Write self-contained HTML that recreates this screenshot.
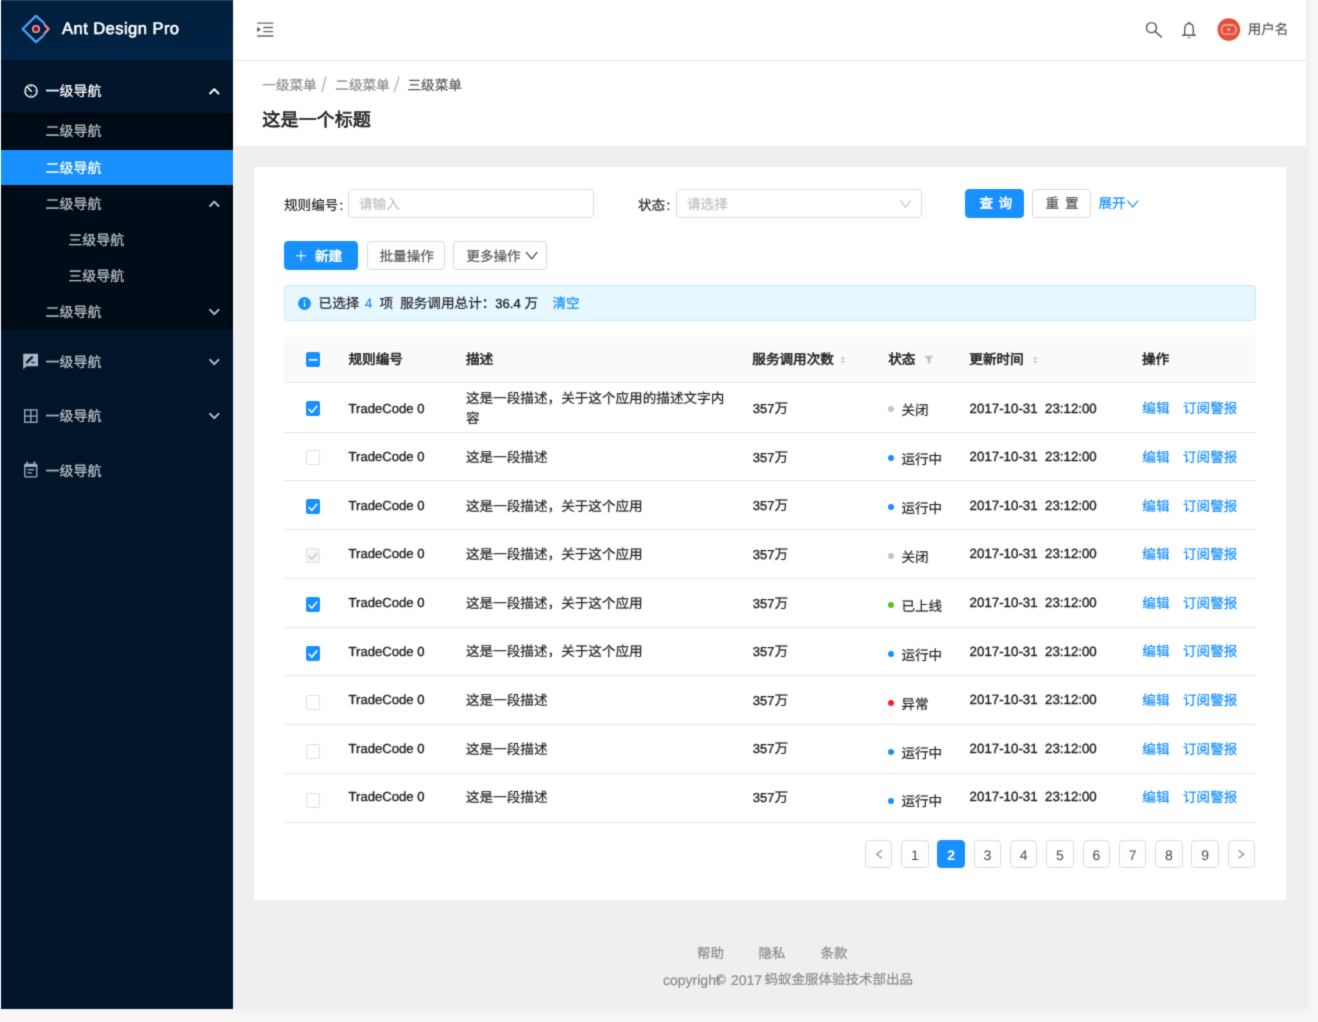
<!DOCTYPE html>
<html lang="zh-CN"><head><meta charset="utf-8"><title>Ant Design Pro</title>
<style>
*{box-sizing:border-box;margin:0;padding:0}
html,body{width:1318px;height:1022px;overflow:hidden}
body{position:relative;background:#f6f6f6;font-family:"Liberation Sans",sans-serif;font-size:13.6px;color:#262626;text-rendering:geometricPrecision}
#w{position:absolute;left:0;top:0;width:1318px;height:1022px;background:#f6f6f6;filter:url(#soft)}
.a{position:absolute;white-space:nowrap}
.t{position:absolute;white-space:nowrap;line-height:20px;height:20px;-webkit-text-stroke:0.2px}
svg{position:absolute;overflow:visible}
.l{font-size:13px;color:#222;-webkit-text-stroke:0.35px #222}
#main{left:234px;top:0;width:1078px;height:1013px;background:linear-gradient(to right,#efefef 1072.5px,#f6f6f6 1078px)}
#mainb{left:234px;top:1008px;width:1078px;height:6px;background:linear-gradient(to bottom,rgba(246,246,246,0),#f6f6f6)}
#side{left:1px;top:0;width:232px;height:1009px;background:#001529}
#logo{left:0;top:0;width:232px;height:59.6px;background:linear-gradient(to bottom,#001e3b,#002140 55%,#002547)}
#sub{left:0;top:113px;width:232px;height:216px;background:#000c17;box-shadow:inset 0 3px 7px -1px rgba(0,0,0,.5)}
#sel{left:0;top:149.8px;width:232px;height:35.6px;background:#1890ff}
.m1{color:#fff;font-size:14px}
.m2{color:rgba(255,255,255,.67);font-size:14px}
#hdr{left:234px;top:0;width:1072px;height:60.5px;background:#fff;border-bottom:1px solid #e4e4e4}
#ph{left:234px;top:60.5px;width:1072px;height:85px;background:#fff}
#card{left:254px;top:166.8px;width:1032.4px;height:733.2px;background:#fff}
.inp{border:1px solid #dcdcdc;border-radius:4px;background:#fff;height:29px}
.ph{color:#bfbfbf}
.btn{border:1px solid #d9d9d9;border-radius:4px;background:#fff;height:28.8px}
.btn.p{background:#1890ff;border-color:#1890ff}
.bt{color:#595959}
.bw{color:#fff;-webkit-text-stroke:0.5px #fff}
.lnk{color:#1890ff}
#alert{left:284px;top:284.6px;width:972px;height:36px;background:#e6f7ff;border:1px solid #c5e8fb;border-radius:4px}
#th{left:284px;top:336.5px;width:972px;height:46.7px;background:#fafafa;border-bottom:1px solid #e8e8e8}
.th{color:#222;-webkit-text-stroke:0.55px #222}
.rl{left:284px;width:972px;height:1px;background:#e8e8e8}
.cb{width:14.5px;height:14.5px;border:1px solid #e0e0e0;border-radius:2px;background:#fff}
.cb.on{background:#1890ff;border-color:#1890ff}
.cb.dis{background:#f5f5f5;border-color:#e0e0e0}
.dot{width:6px;height:6px;border-radius:50%}
.pg{top:840.3px;width:27.6px;height:27.4px;border:1px solid #dcdcdc;border-radius:4px;background:#fff;text-align:center;line-height:28.6px;color:#4a4a4a;font-size:14px}
.pg.on{background:#1890ff;border-color:#1890ff;color:#fff;font-weight:bold}
.ft{color:#8c8c8c;font-size:14px}
</style></head>
<body>
<svg width="0" height="0" style="position:absolute;left:0;top:0"><filter id="soft" x="0" y="0" width="100%" height="100%" color-interpolation-filters="sRGB"><feConvolveMatrix order="3" kernelMatrix="1 4 1 4 20 4 1 4 1" divisor="40" edgeMode="duplicate" preserveAlpha="true"/></filter></svg>
<div id="w">
<div class="a" id="main"></div><div class="a" id="mainb"></div>
<div class="a" id="hdr"></div>
<div class="a" id="ph"></div>
<div class="a" id="card"></div>
<div class="a" style="left:0;top:0;width:1px;height:1010px;background:#fff"></div>
<div class="a" id="side">
<div class="a" id="logo"></div>
<div class="a" id="sub"></div>
<div class="a" id="sel"></div>
<div class="a" style="left:0;top:0;width:232px;height:1px;background:rgba(255,255,255,.16)"></div>
</div>
<svg style="left:20px;top:13px" width="32" height="32" viewBox="0 0 32 32" ><path d="M24 10 L16 2.9 L2.6 16 L16 29.1 L24 22" fill="none" stroke="#4aa3ff" stroke-width="2.2" stroke-linejoin="round" stroke-linecap="round"/><circle cx="16" cy="16" r="3.3" fill="#8e1020" stroke="#f3a3ad" stroke-width="1.5"/><path d="M24.6 11.8 L28.6 16 L24.6 20.2" fill="none" stroke="#f38a95" stroke-width="2.2" stroke-linecap="round" stroke-linejoin="round"/></svg>
<div class="t " style="left:62px;top:19px;color:#fff;font-size:16.6px;-webkit-text-stroke:0.55px #fff;letter-spacing:0.42px;">Ant Design Pro</div>
<div class="t m1" style="left:45.6px;top:80.6px;">一级导航</div>
<div class="t m2" style="left:45.6px;top:121.1px;">二级导航</div>
<div class="t m1" style="left:45.6px;top:157.8px;">二级导航</div>
<div class="t m2" style="left:45.6px;top:194px;">二级导航</div>
<div class="t m2" style="left:68.2px;top:230.2px;">三级导航</div>
<div class="t m2" style="left:68.2px;top:266.2px;">三级导航</div>
<div class="t m2" style="left:45.6px;top:301.5px;">二级导航</div>
<div class="t m2" style="left:45.6px;top:351.5px;">一级导航</div>
<div class="t m2" style="left:45.6px;top:405.5px;">一级导航</div>
<div class="t m2" style="left:45.6px;top:460.5px;">一级导航</div>
<svg style="left:22.5px;top:82.7px" width="16" height="16" viewBox="0 0 16 16" ><circle cx="8" cy="8" r="6.1" fill="none" stroke="#fff" stroke-width="1.35"/><path d="M4.4 4.3 L8.3 8.2" stroke="#fff" stroke-width="1.5" stroke-linecap="round"/><path d="M8 2.6v1.6M8 11.6v1.2M3 8h1.3M11.6 8h1.3" stroke="#fff" stroke-width="1.2" opacity=".8"/></svg>
<svg style="left:22px;top:352px" width="18" height="18" viewBox="0 0 18 18" ><path d="M1.2 1.8 H16 V14.3 H4.6 L1.2 17.2 Z" fill="#a9b6c6"/><path d="M4.9 10.3 L9.9 5.3" stroke="#0a1a2c" stroke-width="2.4" stroke-linecap="round"/><path d="M9.3 10.5 H12.8" stroke="#0a1a2c" stroke-width="1.2"/></svg>
<svg style="left:23px;top:408px" width="16" height="16" viewBox="0 0 16 16" ><rect x="1.7" y="1.9" width="12.2" height="12.4" fill="none" stroke="#a0b0c8" stroke-width="1.3"/><path d="M7.8 1.9v12.4M1.7 8.1h12.2" stroke="#a0b0c8" stroke-width="1.3"/></svg>
<svg style="left:23px;top:461px" width="16" height="18" viewBox="0 0 16 18" ><rect x="1.8" y="3.3" width="12" height="12.6" rx="0.8" fill="none" stroke="#a0b0c8" stroke-width="1.3"/><rect x="1.8" y="3.3" width="12" height="2.6" fill="#a0b0c8"/><path d="M4.2 1.3v2.5M11.4 1.3v2.5" stroke="#a0b0c8" stroke-width="1.8" stroke-linecap="round"/><path d="M4.4 8.6h7M4.4 11.8h4.6" stroke="#a0b0c8" stroke-width="1.2"/></svg>
<svg style="left:0;top:0" width="1" height="1"><path d="M210.10 93.50 L214.30 89.10 L218.50 93.50" fill="none" stroke="#fff" stroke-width="1.9" stroke-linecap="round" stroke-linejoin="round"/></svg>
<svg style="left:0;top:0" width="1" height="1"><path d="M210.10 206.00 L214.30 201.60 L218.50 206.00" fill="none" stroke="#b8bec6" stroke-width="1.9" stroke-linecap="round" stroke-linejoin="round"/></svg>
<svg style="left:0;top:0" width="1" height="1"><path d="M210.10 309.80 L214.30 314.20 L218.50 309.80" fill="none" stroke="#b8bec6" stroke-width="1.9" stroke-linecap="round" stroke-linejoin="round"/></svg>
<svg style="left:0;top:0" width="1" height="1"><path d="M210.10 359.80 L214.30 364.20 L218.50 359.80" fill="none" stroke="#b8bec6" stroke-width="1.9" stroke-linecap="round" stroke-linejoin="round"/></svg>
<svg style="left:0;top:0" width="1" height="1"><path d="M210.10 413.80 L214.30 418.20 L218.50 413.80" fill="none" stroke="#b8bec6" stroke-width="1.9" stroke-linecap="round" stroke-linejoin="round"/></svg>
<svg style="left:257px;top:22px" width="17" height="15" viewBox="0 0 17 15" ><path d="M0.2 1.1H16.4M6.2 5.4H16M6.2 9.6H16M0.2 14H16.4" stroke="#666" stroke-width="1.45"/><path d="M0.2 5 L3.9 7.5 L0.2 10 Z" fill="#555"/></svg>
<svg style="left:1143px;top:20px" width="20" height="20" viewBox="0 0 20 20" ><circle cx="8.5" cy="7.6" r="5" fill="none" stroke="#595959" stroke-width="1.4"/><path d="M12.4 11.7 L18.2 16.9" stroke="#595959" stroke-width="1.5" stroke-linecap="round"/></svg>
<svg style="left:1181px;top:19.9px" width="16" height="20" viewBox="0 0 16 20" ><path d="M3.7 15.2 V9 C3.7 5.4 5.6 3.5 8 3.5 C10.4 3.5 12.3 5.4 12.3 9 V15.2" fill="none" stroke="#595959" stroke-width="1.35"/><path d="M1.5 15.3 H14.5" stroke="#595959" stroke-width="1.4" stroke-linecap="round"/><path d="M8 1.8v1.6" stroke="#595959" stroke-width="1.3" stroke-linecap="round"/><path d="M6.3 17.3 C6.8 18.6 9.2 18.6 9.7 17.3 Z" fill="#595959"/></svg>
<svg style="left:1217px;top:17.5px" width="24" height="24" viewBox="0 0 24 24" ><circle cx="11.8" cy="11.6" r="11.3" fill="#e4503c"/><rect x="4.6" y="7" width="14.4" height="9.2" rx="3.8" fill="none" stroke="#f9b4ab" stroke-width="1.3"/><circle cx="11.8" cy="11.6" r="1.3" fill="#f9c9c2"/></svg>
<div class="t " style="left:1247.7px;top:19.5px;color:#595959;">用户名</div>
<div class="t " style="left:262.3px;top:75.8px;color:#8c8c8c;">一级菜单</div>
<div class="t " style="left:335.3px;top:75.8px;color:#8c8c8c;">二级菜单</div>
<div class="t " style="left:407.5px;top:75.8px;color:#595959;">三级菜单</div>
<svg style="left:0;top:0" width="1" height="1"><path d="M326 76.5 L321.8 92.3 M399.2 76.5 L394 92.3" stroke="#a6a6a6" stroke-width="1.1"/></svg>
<div class="t " style="left:262.3px;top:110.2px;font-size:18.1px;color:#1f1f1f;-webkit-text-stroke:0.6px #1f1f1f;">这是一个标题</div>
<div class="t " style="left:284px;top:195.6px;color:#262626;">规则编号<span style="margin-left:1.2px">:</span></div>
<div class="a inp" style="left:348.1px;top:189.4px;width:246px"></div>
<div class="t ph" style="left:359px;top:195px;">请输入</div>
<div class="t " style="left:638px;top:195.6px;color:#262626;">状态<span style="margin-left:1.2px">:</span></div>
<div class="a inp" style="left:676px;top:189.4px;width:246px"></div>
<div class="t ph" style="left:687px;top:195px;">请选择</div>
<svg style="left:0;top:0" width="1" height="1"><path d="M900.70 200.90 L905.50 207.10 L910.30 200.90" fill="none" stroke="#c4c4c4" stroke-width="1.2" stroke-linecap="round" stroke-linejoin="round"/></svg>
<div class="a btn p" style="left:965.3px;top:189.4px;width:59px"></div>
<div class="t bw" style="left:979.6px;top:194.3px;">查</div>
<div class="t bw" style="left:998.6px;top:194.3px;">询</div>
<div class="a btn" style="left:1032.1px;top:189.4px;width:58.6px"></div>
<div class="t bt" style="left:1045.5px;top:194.3px;">重</div>
<div class="t bt" style="left:1065px;top:194.3px;">置</div>
<div class="t lnk" style="left:1098.5px;top:194px;">展开</div>
<svg style="left:0;top:0" width="1" height="1"><path d="M1127.70 200.90 L1132.70 207.10 L1137.70 200.90" fill="none" stroke="#1890ff" stroke-width="1.2" stroke-linecap="round" stroke-linejoin="round"/></svg>
<div class="a btn p" style="left:284.2px;top:241.4px;width:74px;height:28.4px"></div>
<svg style="left:0;top:0" width="1" height="1"><path d="M296 255.7H306M301 250.7V260.7" stroke="#fff" stroke-width="1.1"/></svg>
<div class="t bw" style="left:315px;top:246.7px;">新建</div>
<div class="a btn" style="left:366.5px;top:241.4px;width:78.6px;height:28.4px"></div>
<div class="t bt" style="left:379.5px;top:246.8px;">批量操作</div>
<div class="a btn" style="left:452.5px;top:241.4px;width:94.2px;height:28.4px"></div>
<div class="t bt" style="left:466.3px;top:246.8px;">更多操作</div>
<svg style="left:0;top:0" width="1" height="1"><path d="M526.40 252.40 L531.70 258.80 L537.00 252.40" fill="none" stroke="#4a4a4a" stroke-width="1.3" stroke-linecap="round" stroke-linejoin="round"/></svg>
<div class="a" id="alert"></div>
<svg style="left:298.4px;top:297px" width="13" height="13" viewBox="0 0 13 13" ><circle cx="6.5" cy="6.5" r="6.4" fill="#1890ff"/><path d="M6.5 5.7v4" stroke="#fff" stroke-width="1.3"/><circle cx="6.5" cy="3.7" r="0.85" fill="#fff"/></svg>
<div class="t " style="left:318.6px;top:294.3px;">已选择</div>
<div class="t lnk" style="left:364.8px;top:294.1px;">4</div>
<div class="t " style="left:379.5px;top:294.3px;">项</div>
<div class="t " style="left:400.2px;top:294.3px;">服务调用总计：<span class="l">36.4</span> 万</div>
<div class="t lnk" style="left:552.4px;top:294.3px;">清空</div>
<div class="a" id="th"></div>
<div class="a cb on" style="left:305.9px;top:352.2px"></div>
<svg style="left:0;top:0" width="1" height="1"><path d="M309 359.9H317.6" stroke="#fff" stroke-width="1.6"/></svg>
<div class="t th" style="left:348.5px;top:350px;">规则编号</div>
<div class="t th" style="left:466px;top:350px;">描述</div>
<div class="t th" style="left:752.3px;top:350px;">服务调用次数</div>
<div class="t th" style="left:888.2px;top:350px;">状态</div>
<div class="t th" style="left:969.3px;top:350px;">更新时间</div>
<div class="t th" style="left:1142px;top:350px;">操作</div>
<svg style="left:0;top:0" width="1" height="1"><path d="M840.5 359.2 l2.3 -2.6 l2.3 2.6z M840.5 361.0 l2.3 2.6 l2.3 -2.6z" fill="#c2c2c2"/></svg>
<svg style="left:0;top:0" width="1" height="1"><path d="M1032.9 359.2 l2.3 -2.6 l2.3 2.6z M1032.9 361.0 l2.3 2.6 l2.3 -2.6z" fill="#c2c2c2"/></svg>
<svg style="left:0;top:0" width="1" height="1"><path d="M924.3 355.8 H933.5 L930.2 359.6 V364 L927.6 362.6 V359.6 Z" fill="#c2c2c2"/></svg>
<div class="a rl" style="top:431.7px"></div>
<div class="a cb on" style="left:305.9px;top:401.4px"></div>
<svg style="left:0;top:0" width="1" height="1"><path d="M308.7 409.0 L311.8 412.4 L317.2 405.8" fill="none" stroke="#fff" stroke-width="1.5"/></svg>
<div class="t " style="left:348.6px;top:398.6px;font-size:13.1px;color:#222;-webkit-text-stroke:0.35px #222;">TradeCode 0</div>
<div class="t " style="left:466px;top:389.2px;">这是一段描述，关于这个应用的描述文字内</div>
<div class="t " style="left:466px;top:408.7px;">容</div>
<div class="t " style="left:752.7px;top:399.2px;"><span class="l">357</span>万</div>
<div class="a dot" style="left:888.2px;top:405.8px;background:#c4c4c4"></div>
<div class="t " style="left:901.4px;top:401px;">关闭</div>
<div class="t " style="left:969.6px;top:398.6px;font-size:13.3px;color:#222;-webkit-text-stroke:0.35px #222;">2017-10-31&nbsp;&nbsp;23:12:00</div>
<div class="t lnk" style="left:1142.3px;top:399.4px;">编辑</div>
<div class="t lnk" style="left:1183px;top:399.4px;">订阅警报</div>
<div class="a rl" style="top:480.1px"></div>
<div class="a cb" style="left:305.9px;top:450.3px"></div>
<div class="t " style="left:348.6px;top:447.2px;font-size:13.1px;color:#222;-webkit-text-stroke:0.35px #222;">TradeCode 0</div>
<div class="t " style="left:466px;top:448px;">这是一段描述</div>
<div class="t " style="left:752.7px;top:447.8px;"><span class="l">357</span>万</div>
<div class="a dot" style="left:888.2px;top:454.8px;background:#1890ff"></div>
<div class="t " style="left:901.4px;top:449.93px;">运行中</div>
<div class="t " style="left:969.6px;top:447.2px;font-size:13.3px;color:#222;-webkit-text-stroke:0.35px #222;">2017-10-31&nbsp;&nbsp;23:12:00</div>
<div class="t lnk" style="left:1142.3px;top:448px;">编辑</div>
<div class="t lnk" style="left:1183px;top:448px;">订阅警报</div>
<div class="a rl" style="top:529.1px"></div>
<div class="a cb on" style="left:305.9px;top:499.2px"></div>
<svg style="left:0;top:0" width="1" height="1"><path d="M308.7 506.9 L311.8 510.3 L317.2 503.7" fill="none" stroke="#fff" stroke-width="1.5"/></svg>
<div class="t " style="left:348.6px;top:495.8px;font-size:13.1px;color:#222;-webkit-text-stroke:0.35px #222;">TradeCode 0</div>
<div class="t " style="left:466px;top:496.6px;">这是一段描述，关于这个应用</div>
<div class="t " style="left:752.7px;top:496.4px;"><span class="l">357</span>万</div>
<div class="a dot" style="left:888.2px;top:503.8px;background:#1890ff"></div>
<div class="t " style="left:901.4px;top:498.86px;">运行中</div>
<div class="t " style="left:969.6px;top:495.8px;font-size:13.3px;color:#222;-webkit-text-stroke:0.35px #222;">2017-10-31&nbsp;&nbsp;23:12:00</div>
<div class="t lnk" style="left:1142.3px;top:496.6px;">编辑</div>
<div class="t lnk" style="left:1183px;top:496.6px;">订阅警报</div>
<div class="a rl" style="top:577.9px"></div>
<div class="a cb dis" style="left:305.9px;top:548.2px"></div>
<svg style="left:0;top:0" width="1" height="1"><path d="M308.7 555.9 L311.8 559.2 L317.2 552.7" fill="none" stroke="#c8c8c8" stroke-width="1.5"/></svg>
<div class="t " style="left:348.6px;top:544.4px;font-size:13.1px;color:#222;-webkit-text-stroke:0.35px #222;">TradeCode 0</div>
<div class="t " style="left:466px;top:545.2px;">这是一段描述，关于这个应用</div>
<div class="t " style="left:752.7px;top:545px;"><span class="l">357</span>万</div>
<div class="a dot" style="left:888.2px;top:552.7px;background:#c4c4c4"></div>
<div class="t " style="left:901.4px;top:547.79px;">关闭</div>
<div class="t " style="left:969.6px;top:544.4px;font-size:13.3px;color:#222;-webkit-text-stroke:0.35px #222;">2017-10-31&nbsp;&nbsp;23:12:00</div>
<div class="t lnk" style="left:1142.3px;top:545.2px;">编辑</div>
<div class="t lnk" style="left:1183px;top:545.2px;">订阅警报</div>
<div class="a rl" style="top:626.5px"></div>
<div class="a cb on" style="left:305.9px;top:597.2px"></div>
<svg style="left:0;top:0" width="1" height="1"><path d="M308.7 604.8 L311.8 608.2 L317.2 601.6" fill="none" stroke="#fff" stroke-width="1.5"/></svg>
<div class="t " style="left:348.6px;top:593px;font-size:13.1px;color:#222;-webkit-text-stroke:0.35px #222;">TradeCode 0</div>
<div class="t " style="left:466px;top:593.8px;">这是一段描述，关于这个应用</div>
<div class="t " style="left:752.7px;top:593.6px;"><span class="l">357</span>万</div>
<div class="a dot" style="left:888.2px;top:601.7px;background:#52c41a"></div>
<div class="t " style="left:901.4px;top:596.72px;">已上线</div>
<div class="t " style="left:969.6px;top:593px;font-size:13.3px;color:#222;-webkit-text-stroke:0.35px #222;">2017-10-31&nbsp;&nbsp;23:12:00</div>
<div class="t lnk" style="left:1142.3px;top:593.8px;">编辑</div>
<div class="t lnk" style="left:1183px;top:593.8px;">订阅警报</div>
<div class="a rl" style="top:675.3px"></div>
<div class="a cb on" style="left:305.9px;top:646.1px"></div>
<svg style="left:0;top:0" width="1" height="1"><path d="M308.7 653.8 L311.8 657.1 L317.2 650.6" fill="none" stroke="#fff" stroke-width="1.5"/></svg>
<div class="t " style="left:348.6px;top:641.6px;font-size:13.1px;color:#222;-webkit-text-stroke:0.35px #222;">TradeCode 0</div>
<div class="t " style="left:466px;top:642.4px;">这是一段描述，关于这个应用</div>
<div class="t " style="left:752.7px;top:642.2px;"><span class="l">357</span>万</div>
<div class="a dot" style="left:888.2px;top:650.7px;background:#1890ff"></div>
<div class="t " style="left:901.4px;top:645.65px;">运行中</div>
<div class="t " style="left:969.6px;top:641.6px;font-size:13.3px;color:#222;-webkit-text-stroke:0.35px #222;">2017-10-31&nbsp;&nbsp;23:12:00</div>
<div class="t lnk" style="left:1142.3px;top:642.4px;">编辑</div>
<div class="t lnk" style="left:1183px;top:642.4px;">订阅警报</div>
<div class="a rl" style="top:724.1px"></div>
<div class="a cb" style="left:305.9px;top:695.1px"></div>
<div class="t " style="left:348.6px;top:690.2px;font-size:13.1px;color:#222;-webkit-text-stroke:0.35px #222;">TradeCode 0</div>
<div class="t " style="left:466px;top:691px;">这是一段描述</div>
<div class="t " style="left:752.7px;top:690.8px;"><span class="l">357</span>万</div>
<div class="a dot" style="left:888.2px;top:699.7px;background:#f5222d"></div>
<div class="t " style="left:901.4px;top:694.58px;">异常</div>
<div class="t " style="left:969.6px;top:690.2px;font-size:13.3px;color:#222;-webkit-text-stroke:0.35px #222;">2017-10-31&nbsp;&nbsp;23:12:00</div>
<div class="t lnk" style="left:1142.3px;top:691px;">编辑</div>
<div class="t lnk" style="left:1183px;top:691px;">订阅警报</div>
<div class="a rl" style="top:772.7px"></div>
<div class="a cb" style="left:305.9px;top:744.0px"></div>
<div class="t " style="left:348.6px;top:738.8px;font-size:13.1px;color:#222;-webkit-text-stroke:0.35px #222;">TradeCode 0</div>
<div class="t " style="left:466px;top:739.6px;">这是一段描述</div>
<div class="t " style="left:752.7px;top:739.4px;"><span class="l">357</span>万</div>
<div class="a dot" style="left:888.2px;top:748.7px;background:#1890ff"></div>
<div class="t " style="left:901.4px;top:743.51px;">运行中</div>
<div class="t " style="left:969.6px;top:738.8px;font-size:13.3px;color:#222;-webkit-text-stroke:0.35px #222;">2017-10-31&nbsp;&nbsp;23:12:00</div>
<div class="t lnk" style="left:1142.3px;top:739.6px;">编辑</div>
<div class="t lnk" style="left:1183px;top:739.6px;">订阅警报</div>
<div class="a rl" style="top:821.5px"></div>
<div class="a cb" style="left:305.9px;top:793.0px"></div>
<div class="t " style="left:348.6px;top:787.4px;font-size:13.1px;color:#222;-webkit-text-stroke:0.35px #222;">TradeCode 0</div>
<div class="t " style="left:466px;top:788.2px;">这是一段描述</div>
<div class="t " style="left:752.7px;top:788px;"><span class="l">357</span>万</div>
<div class="a dot" style="left:888.2px;top:797.6px;background:#1890ff"></div>
<div class="t " style="left:901.4px;top:792.44px;">运行中</div>
<div class="t " style="left:969.6px;top:787.4px;font-size:13.3px;color:#222;-webkit-text-stroke:0.35px #222;">2017-10-31&nbsp;&nbsp;23:12:00</div>
<div class="t lnk" style="left:1142.3px;top:788.2px;">编辑</div>
<div class="t lnk" style="left:1183px;top:788.2px;">订阅警报</div>
<div class="a pg" style="left:864.7px"></div>
<svg style="left:0;top:0" width="1" height="1"><path d="M881.9 850.2 L876.7 854.2 L881.9 858.2" fill="none" stroke="#8c8c8c" stroke-width="1.2"/></svg>
<div class="a pg" style="left:901.0px">1</div>
<div class="a pg on" style="left:937.3px">2</div>
<div class="a pg" style="left:973.6px">3</div>
<div class="a pg" style="left:1009.9px">4</div>
<div class="a pg" style="left:1046.2px">5</div>
<div class="a pg" style="left:1082.5px">6</div>
<div class="a pg" style="left:1118.8px">7</div>
<div class="a pg" style="left:1155.1px">8</div>
<div class="a pg" style="left:1191.4px">9</div>
<div class="a pg" style="left:1227.7px"></div>
<svg style="left:0;top:0" width="1" height="1"><path d="M1238.5 850.2 L1243.7 854.2 L1238.5 858.2" fill="none" stroke="#8c8c8c" stroke-width="1.2"/></svg>
<div class="t ft" style="left:697px;top:944px;font-size:13.5px;">帮助</div>
<div class="t ft" style="left:758.4px;top:944px;font-size:13.5px;">隐私</div>
<div class="t ft" style="left:820.4px;top:944px;font-size:13.5px;">条款</div>
<div class="t ft" style="left:663px;top:969.6px;">copyright</div>
<div class="t ft" style="left:716px;top:969.6px;font-size:13.5px;">©</div>
<div class="t ft" style="left:731px;top:969.6px;">2017</div>
<div class="t ft" style="left:764.6px;top:969.9px;font-size:13.5px;">蚂蚁金服体验技术部出品</div>
</div>
</body></html>
